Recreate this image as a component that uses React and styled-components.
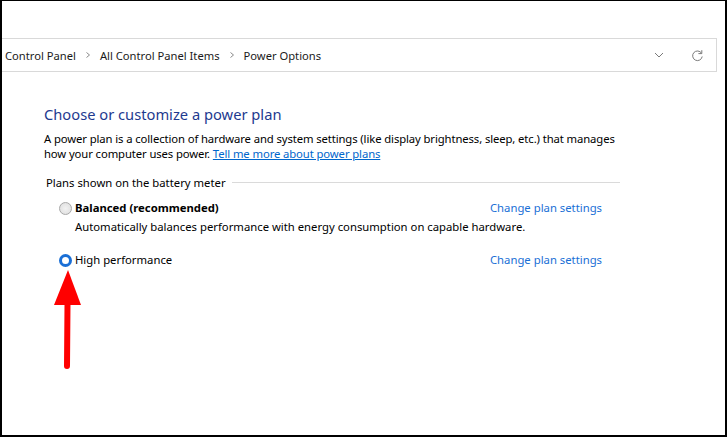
import React from 'react'
import styled, { createGlobalStyle } from 'styled-components'

const Global = createGlobalStyle`
  html, body { margin: 0; padding: 0; background: #fff; }
  body { font-family: "Noto Sans", "Open Sans", sans-serif; color: #000; }
`;

const Frame = styled.div`
  position: relative;
  width: 727px;
  height: 437px;
  box-sizing: border-box;
  border-top: 1px solid #000;
  border-left: 2px solid #000;
  border-right: 2px solid #000;
  border-bottom: 2px solid #000;
  background: #fff;
  overflow: hidden;
`;

const AddressBar = styled.div`
  display: flex;
  align-items: center;
  height: 34px;
  box-sizing: border-box;
  margin: 37px 8px 0 0;
  border: 1px solid #d9d9d9;
  border-left: none;
  padding-left: 3px;
  font-size: 11.2px;
  color: #1a1a1a;
`;

const Crumb = styled.span`
  white-space: nowrap;
`;

const Sep = styled.span`
  display: inline-flex;
  align-items: center;
  justify-content: center;
  width: 24px;
  color: #8a8a8a;
`;

const BarIcons = styled.div`
  margin-left: auto;
  display: flex;
  align-items: center;
  gap: 27px;
  padding-right: 12px;
`;

const Content = styled.div`
  padding: 32px 0 0 42px;
  width: 576px;
`;

const Heading = styled.h1`
  margin: 0;
  font-size: 14.7px;
  font-weight: 400;
  color: #1e3a8f;
  line-height: 20px;
`;

const Para = styled.p`
  margin: 7px 0 0;
  font-size: 11.3px;
  letter-spacing: -0.11px;
  line-height: 15px;
  color: #000;
  white-space: nowrap;
`;

const Link = styled.a`
  color: #0066cc;
  text-decoration: underline;
`;

const GroupHead = styled.div`
  display: flex;
  align-items: center;
  gap: 6px;
  margin: 14px 0 0 2px;
  font-size: 11.3px;
  line-height: 15px;
`;

const Rule = styled.div`
  flex: 1;
  height: 1px;
  background: #dadada;
`;

const Plan = styled.div`
  display: grid;
  grid-template-columns: 16px 1fr auto;
  align-items: center;
  margin: ${p => p.$top}px 18px 0 15px;
  font-size: 11.3px;
  line-height: 16px;
`;

const Radio = styled.span`
  width: 13px;
  height: 13px;
  box-sizing: border-box;
  border-radius: 50%;
  ${p => p.$checked
    ? 'border: 3px solid #1a6fd6; background: #fff;'
    : 'border: 1px solid #a8a8a8; background: radial-gradient(circle, #f2f2f2, #dcdcdc);'}
`;

const PlanName = styled.span`
  font-weight: ${p => (p.$bold ? 700 : 400)};
`;

const PlanLink = styled.a`
  color: #1a6fd6;
  text-decoration: none;
`;

const PlanDesc = styled.div`
  grid-column: 2 / 4;
  margin-top: 3px;
`;

const Arrow = styled.svg`
  position: absolute;
  left: 48px;
  top: 267px;
`;

export default function App() {
  return (
    <>
      <Global />
      <Frame>
        <AddressBar>
          <Crumb>Control Panel</Crumb>
          <Sep>
            <svg width="6" height="8" viewBox="0 0 6 8"><path d="M1.5 1.5 L4.5 4 L1.5 6.5" fill="none" stroke="#8a8a8a" strokeWidth="1" /></svg>
          </Sep>
          <Crumb>All Control Panel Items</Crumb>
          <Sep>
            <svg width="6" height="8" viewBox="0 0 6 8"><path d="M1.5 1.5 L4.5 4 L1.5 6.5" fill="none" stroke="#8a8a8a" strokeWidth="1" /></svg>
          </Sep>
          <Crumb>Power Options</Crumb>
          <BarIcons>
            <svg width="10" height="6" viewBox="0 0 10 6"><path d="M1 1 L5 5 L9 1" fill="none" stroke="#7a7a7a" strokeWidth="1" /></svg>
            <svg width="13" height="13" viewBox="0 0 13 13">
              <path d="M10.5 4.2 A4.8 4.8 0 1 0 11.2 7.5" fill="none" stroke="#7a7a7a" strokeWidth="1" />
              <path d="M10.8 1.2 L10.8 4.6 L7.4 4.6" fill="none" stroke="#7a7a7a" strokeWidth="1" />
            </svg>
          </BarIcons>
        </AddressBar>
        <Content>
          <Heading>Choose or customize a power plan</Heading>
          <Para>
            A power plan is a collection of hardware and system settings (like display brightness, sleep, etc.) that manages<br />
            how your computer uses power. <Link href="#">Tell me more about power plans</Link>
          </Para>
          <GroupHead>
            <span>Plans shown on the battery meter</span>
            <Rule />
          </GroupHead>
          <Plan $top={10}>
            <Radio />
            <PlanName $bold>Balanced (recommended)</PlanName>
            <PlanLink href="#">Change plan settings</PlanLink>
            <PlanDesc>Automatically balances performance with energy consumption on capable hardware.</PlanDesc>
          </Plan>
          <Plan $top={17}>
            <Radio $checked />
            <PlanName>High performance</PlanName>
            <PlanLink href="#">Change plan settings</PlanLink>
          </Plan>
        </Content>
        <Arrow width="34" height="104" viewBox="0 0 34 104">
          <polygon points="18,2 4,37 31,37" fill="#ff0000" />
          <line x1="17.5" y1="36" x2="17" y2="98" stroke="#ff0000" strokeWidth="6" strokeLinecap="round" />
        </Arrow>
      </Frame>
    </>
  )
}
